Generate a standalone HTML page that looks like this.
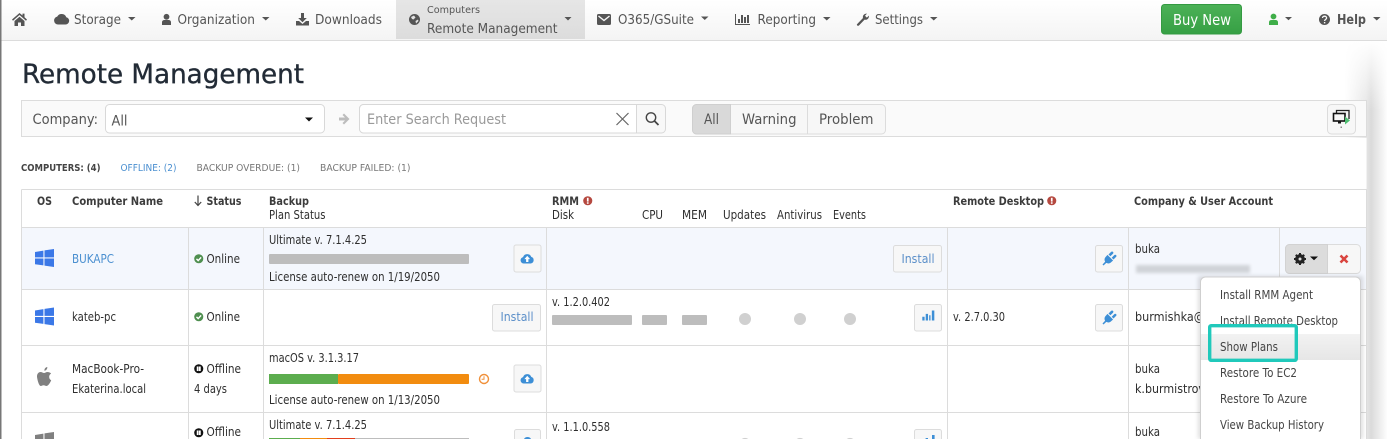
<!DOCTYPE html>
<html lang="en">
<head>
<meta charset="utf-8">
<title>Remote Management</title>
<style>
html,body{margin:0;padding:0;background:#fff;width:1387px;height:439px;overflow:hidden}
svg{display:block}
text{font-family:"DejaVu Sans","Liberation Sans",sans-serif;fill:#2e2e2e;white-space:pre}
.n{font-size:13.5px;fill:#555}
.t{font-size:12px;fill:#2e2e2e}
.h{font-size:11.5px;font-weight:bold;fill:#3c3c3c}
.s{font-size:10px;fill:#777}
.b{fill:#f7f7f7;stroke:#dcdcdc;stroke-width:1}
.l{stroke:#dcdcdc;stroke-width:1;fill:none}
.f{font-size:14.5px;fill:#555}
.d{font-size:12px;fill:#444}
</style>
</head>
<body>
<svg xmlns="http://www.w3.org/2000/svg" width="1387" height="439" viewBox="0 0 1387 439">
<defs>
<linearGradient id="nav" x1="0" y1="0" x2="0" y2="1"><stop offset="0" stop-color="#fff"/><stop offset="1" stop-color="#f4f4f4"/></linearGradient>
<linearGradient id="act" x1="0" y1="0" x2="0" y2="1"><stop offset="0" stop-color="#e6e6e6"/><stop offset="1" stop-color="#dcdcdc"/></linearGradient>
<linearGradient id="grn" x1="0" y1="0" x2="0" y2="1"><stop offset="0" stop-color="#4cb157"/><stop offset="1" stop-color="#36a044"/></linearGradient>
<linearGradient id="hl" x1="0" y1="0" x2="0" y2="1"><stop offset="0" stop-color="#f2f2f2"/><stop offset="1" stop-color="#e6e6e6"/></linearGradient>
<linearGradient id="shx" x1="0" y1="0" x2="1" y2="0"><stop offset="0" stop-color="#fff"/><stop offset=".5" stop-color="#e6e6e6"/><stop offset=".62" stop-color="#dadada"/><stop offset="1" stop-color="#fdfdfd"/></linearGradient>
<linearGradient id="shy" x1="0" y1="0" x2="0" y2="1"><stop offset="0" stop-color="#fff" stop-opacity="1"/><stop offset="1" stop-color="#fff" stop-opacity="0"/></linearGradient>
<filter id="bl" x="-20%" y="-100%" width="140%" height="300%"><feGaussianBlur stdDeviation="1.6"/></filter>
<filter id="dds" x="-10%" y="-10%" width="120%" height="120%"><feGaussianBlur stdDeviation="2"/></filter>
<symbol id="win" viewBox="0 0 19 18" overflow="visible">
<path d="M0 3 8.4 1.6V8.4H0ZM9.5 1.4 19 0V8.4H9.5ZM0 9.5H8.4V16.4L0 15.2ZM9.5 9.5H19V18L9.5 16.6Z"/>
</symbol>
<symbol id="cup" viewBox="0 0 14 11" overflow="visible">
<path fill="#3d8fd6" d="M3.5 11A3.4 3.4 0 0 1 2.6 4.3 4.6 4.6 0 0 1 11.2 4 3.6 3.6 0 0 1 10.6 11Z"/>
<path fill="#fff" d="M7 3 10 6.4H8.2V9.4H5.8V6.4H4Z"/>
</symbol>
<symbol id="plug" viewBox="0 0 14 14" overflow="visible">
<path fill="#3d8fd6" d="M0 13 2.6 10.2C1.6 8.4 2 6.6 3.2 5.4L5 3.4 10.6 9 8.6 10.8C7.4 12 5.6 12.4 3.8 11.4L1 14ZM6 3 8.6.4C9.2-.1 10-.1 10.5.4 11 .9 11 1.7 10.5 2.2L7.9 4.8ZM9.2 6.2 11.8 3.6C12.3 3.1 13.1 3.1 13.6 3.6 14.1 4.1 14.1 4.9 13.6 5.4L11 8Z"/>
</symbol>
<symbol id="chart" viewBox="0 0 13 11" overflow="visible">
<path fill="#3d8fd6" d="M0 6.5H2.4V10.5H0ZM3.6 3.5H6V10.5H3.6ZM7.2 5H8.6V10.5H7.2ZM10 0H12.6V10.5H10Z"/>
</symbol>
<symbol id="ok" viewBox="0 0 10 10" overflow="visible">
<circle cx="5" cy="5" r="4.8" fill="#4f8f50"/>
<path d="M2.6 5.1 4.4 6.9 7.5 3.6" fill="none" stroke="#fff" stroke-width="1.5"/>
</symbol>
<symbol id="off" viewBox="0 0 10 10" overflow="visible">
<circle cx="5" cy="5" r="4.8" fill="#111"/>
<rect x="2.9" y="2.6" width="1.9" height="4.8" fill="#fff"/><rect x="5.2" y="2.6" width="1.9" height="4.8" fill="#fff"/>
</symbol>
<symbol id="ex" viewBox="0 0 10 10" overflow="visible">
<circle cx="5" cy="5" r="4.8" fill="#b5483f"/>
<rect x="4.1" y="1.9" width="1.8" height="4" fill="#fff"/><rect x="4.1" y="6.6" width="1.8" height="1.6" fill="#fff"/>
</symbol>
</defs>

<rect width="1387" height="439" fill="#fff"/>

<!-- right side shadow -->
<rect x="1345" y="41" width="42" height="398" fill="url(#shx)"/>
<rect x="1345" y="41" width="42" height="70" fill="url(#shy)"/>
<rect x="0" y="138" width="1366.5" height="301" fill="#fff"/>

<!-- navbar -->
<rect x="0" y="0" width="1387" height="40" fill="url(#nav)"/>
<rect x="0" y="40" width="1387" height="1" fill="#dcdcdc"/>
<rect x="396" y="0" width="189" height="39" fill="url(#act)"/>
<rect x="0" y="0" width="1.5" height="439" fill="#777"/>

<path fill="#555" d="M19.5 13 12 19.5 13 20.7 19.5 15 26 20.7 27 19.5 24.5 17.3V13.6H22.5V15.5ZM14.5 21 19.5 16.7 24.5 21V26H21V22.5H18V26H14.5Z"/>
<path fill="#555" d="M58 24.5A4 4 0 0 1 57.2 16.6 5 5 0 0 1 66.3 17.2 3.7 3.7 0 0 1 65.6 24.5Z"/>
<text class="n" x="74" y="24" textLength="47" lengthAdjust="spacingAndGlyphs">Storage</text>
<path fill="#555" d="M128 17H135.5L131.75 20.5Z"/>
<circle cx="166.5" cy="16.8" r="2.9" fill="#555"/><path fill="#555" d="M162 25V22.3C162 20.6 163.3 20 164.6 20H168.4C169.7 20 171 20.6 171 22.3V25Z"/>
<text class="n" x="177.5" y="24" textLength="77.5" lengthAdjust="spacingAndGlyphs">Organization</text>
<path fill="#555" d="M262 17H269.5L265.75 20.5Z"/>
<path fill="#555" d="M301 13H304V18H306.8L302.5 22.3 298.2 18H301ZM296 21H299L302.5 24 306 21H309V25.5H296Z"/>
<text class="n" x="315" y="24" textLength="67" lengthAdjust="spacingAndGlyphs">Downloads</text>

<circle cx="414.5" cy="19.5" r="5.5" fill="#555"/>
<path fill="#e2e2e2" d="M411 17 414 15.5 415.5 17.5 413.5 19.5 412 19ZM415.5 21 418 19.5 418.5 21 416 23.5Z"/>
<text x="427" y="13" style="font-size:10px;fill:#555" textLength="53" lengthAdjust="spacingAndGlyphs">Computers</text>
<text class="n" x="427" y="33" textLength="130.5" lengthAdjust="spacingAndGlyphs">Remote Management</text>
<path fill="#555" d="M564.5 17H571.5L568 20.5Z"/>

<rect x="597" y="14" width="14" height="11" rx="1.5" fill="#555"/>
<path d="M598.5 16 604 20.5 609.5 16" fill="none" stroke="#f8f8f8" stroke-width="1.4"/>
<text class="n" x="618" y="24" textLength="76" lengthAdjust="spacingAndGlyphs">O365/GSuite</text>
<path fill="#555" d="M701 16.5H708.5L704.75 20Z"/>

<path fill="#555" d="M735 14H736V24H750V25H735ZM738 19H740V23H738ZM741 15H743V23H741ZM744 17H746V23H744ZM747 15H749V23H747Z"/>
<text class="n" x="757.5" y="24" textLength="58.5" lengthAdjust="spacingAndGlyphs">Reporting</text>
<path fill="#555" d="M823 17H830.5L826.75 20.5Z"/>
<path fill="#555" d="M857 24.2 863 18C862.3 15.8 864 13.4 867 13.6L865 15.8 866.8 17.6 869 15.6C869.2 18.4 867 20.3 864.6 19.6L858.8 25.6C858 26.2 856.4 25.2 857 24.2Z"/>
<text class="n" x="875" y="24" textLength="48" lengthAdjust="spacingAndGlyphs">Settings</text>
<path fill="#555" d="M930 17H937.5L933.75 20.5Z"/>

<rect x="1161.5" y="4.5" width="80" height="29.5" rx="3" fill="url(#grn)" stroke="#349a42"/>
<text x="1173" y="25" style="font-size:15px;fill:#fff;font-weight:500" textLength="58" lengthAdjust="spacingAndGlyphs">Buy New</text>
<circle cx="1273.5" cy="16.5" r="2.9" fill="#3fae49"/><path fill="#3fae49" d="M1269 25V22.3C1269 20.6 1270.3 20 1271.6 20H1275.4C1276.7 20 1278 20.6 1278 22.3V25Z"/>
<path fill="#555" d="M1285 17H1292L1288.5 20.2Z"/>
<circle cx="1324.5" cy="19.5" r="5.5" fill="#555"/>
<path d="M1322.5 18C1322.5 15.6 1326.6 15.6 1326.6 18 1326.6 19.4 1324.6 19.4 1324.6 21" fill="none" stroke="#f8f8f8" stroke-width="1.3"/>
<rect x="1323.9" y="22" width="1.4" height="1.4" fill="#f8f8f8"/>
<text x="1337" y="24" style="font-size:13.5px;font-weight:bold;fill:#555" textLength="29" lengthAdjust="spacingAndGlyphs">Help</text>
<path fill="#555" d="M1373 17H1380.5L1376.75 20.5Z"/>

<!-- title -->
<text x="22" y="83" style="font-size:27px;fill:#222b36;stroke:#222b36;stroke-width:.35" textLength="282" lengthAdjust="spacingAndGlyphs">Remote Management</text>

<!-- toolbar -->
<rect x="21.5" y="100.5" width="1345" height="36" fill="#fafafa" stroke="#dcdcdc"/>
<text class="f" x="32.5" y="124" textLength="65.5" lengthAdjust="spacingAndGlyphs">Company:</text>
<rect x="105.5" y="104.5" width="219" height="28.5" rx="4" fill="#fff" stroke="#d8d8d8"/>
<text class="f" x="111.5" y="125.5" textLength="16" lengthAdjust="spacingAndGlyphs">All</text>
<path fill="#111" d="M305 117.5H313L309 121.5Z"/>
<path fill="#bdbdbd" d="M344 113.5 349.5 119 344 124.5 342.5 123 345 120.5H339V117.5H345L342.5 115Z"/>
<rect x="359.5" y="104.5" width="306" height="28.5" rx="4" fill="#f8f8f8" stroke="#d8d8d8"/>
<path d="M363.5 104.5H636.5V133H363.5A4 4 0 0 1 359.5 129V108.5A4 4 0 0 1 363.5 104.5Z" fill="#fff" stroke="#d8d8d8"/>
<text x="367" y="124" style="font-size:14.5px;fill:#9a9a9a" textLength="139" lengthAdjust="spacingAndGlyphs">Enter Search Request</text>
<path d="M616.5 113 628.5 125M628.5 113 616.5 125" stroke="#666" stroke-width="1.2" fill="none"/>
<circle cx="651" cy="117.5" r="4.7" fill="none" stroke="#444" stroke-width="1.4"/>
<path d="M654.5 121 658.5 125" stroke="#444" stroke-width="1.8"/>

<rect x="692.5" y="104.5" width="193" height="29.5" rx="4" fill="#f7f7f7" stroke="#dcdcdc"/>
<path d="M696.5 104.5H730.5V134H696.5A4 4 0 0 1 692.5 130V108.5A4 4 0 0 1 696.5 104.5Z" fill="#d9d9d9" stroke="#cfcfcf"/>
<path d="M807.5 105V134" class="l"/>
<text class="f" x="704" y="124" textLength="15" lengthAdjust="spacingAndGlyphs">All</text>
<text class="f" x="742" y="124" textLength="54.5" lengthAdjust="spacingAndGlyphs">Warning</text>
<text class="f" x="819" y="124" textLength="54.5" lengthAdjust="spacingAndGlyphs">Problem</text>

<rect x="1327.5" y="104.5" width="28" height="29.5" rx="4" fill="#f7f7f7" stroke="#dcdcdc"/>
<path d="M1336.5 113V110.5H1349V119" fill="none" stroke="#222" stroke-width="1.3"/>
<rect x="1333.5" y="113.5" width="11.5" height="7.5" fill="#f7f7f7" stroke="#111" stroke-width="1.6"/>
<path d="M1338 121.5H1341V123.5H1338Z" fill="#111"/>
<path fill="#4fbf72" d="M1345 116.5 1350 120.5 1345 124.5Z"/>
<rect x="1340.5" y="126.5" width="1.5" height="1.5" fill="#888"/>

<!-- stats -->
<text x="21" y="171" style="font-size:10px;font-weight:bold;fill:#444" textLength="79.5" lengthAdjust="spacingAndGlyphs">COMPUTERS: (4)</text>
<text x="120.5" y="171" style="font-size:10px;fill:#4a8fd0" textLength="56" lengthAdjust="spacingAndGlyphs">OFFLINE: (2)</text>
<text class="s" x="196.5" y="171" textLength="103.5" lengthAdjust="spacingAndGlyphs">BACKUP OVERDUE: (1)</text>
<text class="s" x="320" y="171" textLength="90.5" lengthAdjust="spacingAndGlyphs">BACKUP FAILED: (1)</text>

<!-- table -->
<rect x="22" y="228" width="1344" height="61" fill="#f4f7fd"/>
<path class="l" d="M21.5 189.5H1366.5V439M21.5 189.5V439M21.5 227.5H1366.5M21.5 289.5H1366.5M21.5 345.5H1366.5M21.5 412.5H1366.5"/>
<path class="l" d="M188.5 227.5V439M263.5 227.5V439M546.5 227.5V439M947.5 227.5V439M1128.5 227.5V439M1279.5 227.5V289.5"/>

<!-- header -->
<text class="h" x="37" y="205" textLength="15" lengthAdjust="spacingAndGlyphs">OS</text>
<text class="h" x="72" y="205" textLength="91" lengthAdjust="spacingAndGlyphs">Computer Name</text>
<path d="M198 195.5V205M194.8 202 198 205.5 201.2 202" fill="none" stroke="#444" stroke-width="1.2"/>
<text class="h" x="206.5" y="205" textLength="35" lengthAdjust="spacingAndGlyphs">Status</text>
<text class="h" x="269" y="205" textLength="40" lengthAdjust="spacingAndGlyphs">Backup</text>
<text class="t" x="269" y="219" textLength="56.5" lengthAdjust="spacingAndGlyphs">Plan Status</text>
<text class="h" x="552" y="205" textLength="27" lengthAdjust="spacingAndGlyphs">RMM</text>
<use href="#ex" x="583" y="196" width="9.5" height="9.5"/>
<text class="t" x="552" y="219" textLength="22" lengthAdjust="spacingAndGlyphs">Disk</text>
<text class="t" x="642" y="219" textLength="21" lengthAdjust="spacingAndGlyphs">CPU</text>
<text class="t" x="682" y="219" textLength="25" lengthAdjust="spacingAndGlyphs">MEM</text>
<text class="t" x="723" y="219" textLength="43" lengthAdjust="spacingAndGlyphs">Updates</text>
<text class="t" x="777" y="219" textLength="45" lengthAdjust="spacingAndGlyphs">Antivirus</text>
<text class="t" x="833" y="219" textLength="33" lengthAdjust="spacingAndGlyphs">Events</text>
<text class="h" x="953" y="205" textLength="91" lengthAdjust="spacingAndGlyphs">Remote Desktop</text>
<use href="#ex" x="1047" y="196" width="9.5" height="9.5"/>
<text class="h" x="1134" y="205" textLength="139" lengthAdjust="spacingAndGlyphs">Company &amp; User Account</text>

<!-- row 1 -->
<use href="#win" x="35" y="249" width="19" height="18" fill="#3b78e7"/>
<text class="t" x="72" y="263" style="fill:#4a8fd0" textLength="42" lengthAdjust="spacingAndGlyphs">BUKAPC</text>
<use href="#ok" x="194" y="254" width="9.5" height="9.5"/>
<text class="t" x="206.5" y="263" textLength="33.5" lengthAdjust="spacingAndGlyphs">Online</text>
<text class="t" x="269" y="244" textLength="98" lengthAdjust="spacingAndGlyphs">Ultimate v. 7.1.4.25</text>
<rect x="269" y="254" width="200" height="10" rx="1" fill="#bdbdbd"/>
<text class="t" x="269" y="281" textLength="171" lengthAdjust="spacingAndGlyphs">License auto-renew on 1/19/2050</text>
<rect class="b" x="514" y="245" width="27" height="27" rx="2"/>
<use href="#cup" x="520.5" y="253" width="13.5" height="10.5"/>
<rect class="b" x="893.5" y="245.5" width="48" height="26.5" rx="2"/>
<text class="t" x="901.5" y="263" style="fill:#5b8fc9" textLength="33" lengthAdjust="spacingAndGlyphs">Install</text>
<rect class="b" x="1095.5" y="245.5" width="27" height="26.5" rx="2"/>
<use href="#plug" x="1102.5" y="251.5" width="14" height="14"/>
<text class="t" x="1135" y="253" textLength="25" lengthAdjust="spacingAndGlyphs">buka</text>
<rect x="1136" y="265" width="114" height="8" fill="#d0d3d8" filter="url(#bl)"/>
<rect x="1285.5" y="244.5" width="75" height="29" rx="4" fill="#f7f7f7" stroke="#dcdcdc"/>
<path d="M1289.5 244.5H1327.5V273.5H1289.5A4 4 0 0 1 1285.5 269.5V248.5A4 4 0 0 1 1289.5 244.5Z" fill="#dcdcdc" stroke="#d2d2d2"/>
<circle cx="1300" cy="259" r="3.6" fill="none" stroke="#222" stroke-width="2.6"/>
<path d="M1300 253V265M1294 259H1306M1295.8 254.8 1304.2 263.2M1304.2 254.8 1295.8 263.2" stroke="#222" stroke-width="2"/>
<circle cx="1300" cy="259" r="1.5" fill="#dcdcdc"/>
<path fill="#111" d="M1310 256.5H1318L1314 260.2Z"/>
<path d="M1340.5 255.5 1347.5 262.5M1347.5 255.5 1340.5 262.5" stroke="#d9453f" stroke-width="2.6"/>

<!-- row 2 -->
<use href="#win" x="35" y="307.5" width="19" height="18" fill="#3b78e7"/>
<text class="t" x="72" y="321" textLength="44" lengthAdjust="spacingAndGlyphs">kateb-pc</text>
<use href="#ok" x="194" y="312" width="9.5" height="9.5"/>
<text class="t" x="206.5" y="321" textLength="33.5" lengthAdjust="spacingAndGlyphs">Online</text>
<rect class="b" x="492.5" y="304.5" width="48" height="26.5" rx="2"/>
<text class="t" x="500.5" y="321" style="fill:#5b8fc9" textLength="33" lengthAdjust="spacingAndGlyphs">Install</text>
<text class="t" x="552" y="306" textLength="58" lengthAdjust="spacingAndGlyphs">v. 1.2.0.402</text>
<rect x="552" y="315" width="80" height="10" rx="1" fill="#bdbdbd"/>
<rect x="642" y="315" width="25" height="10" rx="1" fill="#bdbdbd"/>
<rect x="682" y="315" width="25" height="10" rx="1" fill="#bdbdbd"/>
<circle cx="745" cy="319" r="6" fill="#d0d0d0"/>
<circle cx="800" cy="319" r="6" fill="#d0d0d0"/>
<circle cx="850" cy="319" r="6" fill="#d0d0d0"/>
<rect class="b" x="914.5" y="304.5" width="27" height="26.5" rx="2"/>
<use href="#chart" x="922" y="310.5" width="13" height="10.5"/>
<text class="t" x="953" y="321" textLength="52" lengthAdjust="spacingAndGlyphs">v. 2.7.0.30</text>
<rect class="b" x="1095.5" y="304.5" width="27" height="26.5" rx="2"/>
<use href="#plug" x="1102.5" y="310.5" width="14" height="14"/>
<text class="t" x="1135" y="321" textLength="70" lengthAdjust="spacingAndGlyphs">burmishka@</text>

<!-- row 3 -->
<path fill="#808080" transform="translate(0.5,0)" d="M47 372C45.5 372 44.7 373 43.6 373 42.4 373 41.4 372 40.1 372 38.1 372 36 374 36.6 377.5 37 380.5 38.6 386 40.3 386 41.3 386 41.8 385.3 43.1 385.3 44.4 385.3 44.8 386 45.9 386 47.5 386 49.6 383 50.7 380.2 48.1 379 47.9 375 50.6 373.6 49.9 372.6 48 372 47 372ZM46.8 367C45 367.3 43.8 368.8 43.9 370.8 45.7 370.6 47 368.9 46.8 367Z"/>
<text class="t" x="72" y="373" textLength="72" lengthAdjust="spacingAndGlyphs">MacBook-Pro-</text>
<text class="t" x="72" y="393" textLength="74" lengthAdjust="spacingAndGlyphs">Ekaterina.local</text>
<use href="#off" x="194" y="364" width="9.5" height="9.5"/>
<text class="t" x="206.5" y="373" textLength="34.5" lengthAdjust="spacingAndGlyphs">Offline</text>
<text class="t" x="194" y="393" textLength="33" lengthAdjust="spacingAndGlyphs">4 days</text>
<text class="t" x="269" y="362" textLength="90" lengthAdjust="spacingAndGlyphs">macOS v. 3.1.3.17</text>
<rect x="269" y="374" width="69" height="10" fill="#5cad4e"/>
<rect x="338" y="374" width="131" height="10" rx="1" fill="#f28c0f"/>
<circle cx="484" cy="379" r="4.5" fill="none" stroke="#f0903a" stroke-width="1.4"/>
<path d="M484 376.3V379.3H481.6" fill="none" stroke="#f0903a" stroke-width="1"/>
<rect class="b" x="514" y="365" width="27" height="27" rx="2"/>
<use href="#cup" x="520.5" y="373" width="13.5" height="10.5"/>
<text class="t" x="269" y="404" textLength="171" lengthAdjust="spacingAndGlyphs">License auto-renew on 1/13/2050</text>
<text class="t" x="1135" y="373" textLength="25" lengthAdjust="spacingAndGlyphs">buka</text>
<text class="t" x="1135" y="393" textLength="70" lengthAdjust="spacingAndGlyphs">k.burmistrov</text>

<!-- row 4, cut off by the bottom of the frame -->
<path fill="#808080" d="M35 435 43.4 433.6V439H35ZM44.5 433.4 54 432V439H44.5Z"/>
<use href="#off" x="194" y="428" width="9.5" height="9.5"/>
<text class="t" x="206.5" y="436" textLength="34.5" lengthAdjust="spacingAndGlyphs">Offline</text>
<text class="t" x="269" y="429" textLength="98" lengthAdjust="spacingAndGlyphs">Ultimate v. 7.1.4.25</text>
<rect x="269" y="438" width="31" height="1" fill="#5cad4e"/>
<rect x="300" y="438" width="27" height="1" fill="#f28c0f"/>
<rect x="327" y="438" width="28" height="1" fill="#e2401c"/>
<rect x="355" y="438" width="114" height="1" fill="#bdbdbd"/>
<path class="b" d="M514.5 439V431.5A2 2 0 0 1 516.5 429.5H538.5A2 2 0 0 1 540.5 431.5V439"/>
<path fill="#3d8fd6" d="M524 439C524.6 437.8 526 437 527.5 437 529 437 530.4 437.8 531 439Z"/>
<text class="t" x="552" y="431" textLength="58" lengthAdjust="spacingAndGlyphs">v. 1.1.0.558</text>
<path fill="#d0d0d0" d="M741.7 439A6 6 0 0 1 748.3 439ZM796.7 439A6 6 0 0 1 803.3 439ZM846.7 439A6 6 0 0 1 853.3 439Z"/>
<path class="b" d="M914.5 439V431.5A2 2 0 0 1 916.5 429.5H939.5A2 2 0 0 1 941.5 431.5V439"/>
<path fill="#3d8fd6" d="M932 435H934.6V439H932ZM925.6 438H928V439H925.6Z"/>
<text class="t" x="1135" y="436" textLength="25" lengthAdjust="spacingAndGlyphs">buka</text>

<!-- dropdown -->
<rect x="1198" y="276" width="165" height="163" fill="#000" opacity=".12" filter="url(#dds)"/>
<path d="M1200.5 439V282A5 5 0 0 1 1205.5 277H1355.5A5 5 0 0 1 1360.5 282V439" fill="#fff" stroke="#cfcfcf"/>
<rect x="1201" y="334" width="159" height="26" fill="url(#hl)"/>
<text class="d" x="1220" y="299" textLength="93" lengthAdjust="spacingAndGlyphs">Install RMM Agent</text>
<text class="d" x="1220" y="325" textLength="118" lengthAdjust="spacingAndGlyphs">Install Remote Desktop</text>
<text class="d" x="1220" y="351" textLength="58" lengthAdjust="spacingAndGlyphs">Show Plans</text>
<text class="d" x="1220" y="377" textLength="77" lengthAdjust="spacingAndGlyphs">Restore To EC2</text>
<text class="d" x="1220" y="403" textLength="87" lengthAdjust="spacingAndGlyphs">Restore To Azure</text>
<text class="d" x="1220" y="429" textLength="104" lengthAdjust="spacingAndGlyphs">View Backup History</text>
<rect x="1209.7" y="325.7" width="86.6" height="34.6" rx="1.5" fill="none" stroke="#20c9bb" stroke-width="3.4"/>
</svg>
</body>
</html>
